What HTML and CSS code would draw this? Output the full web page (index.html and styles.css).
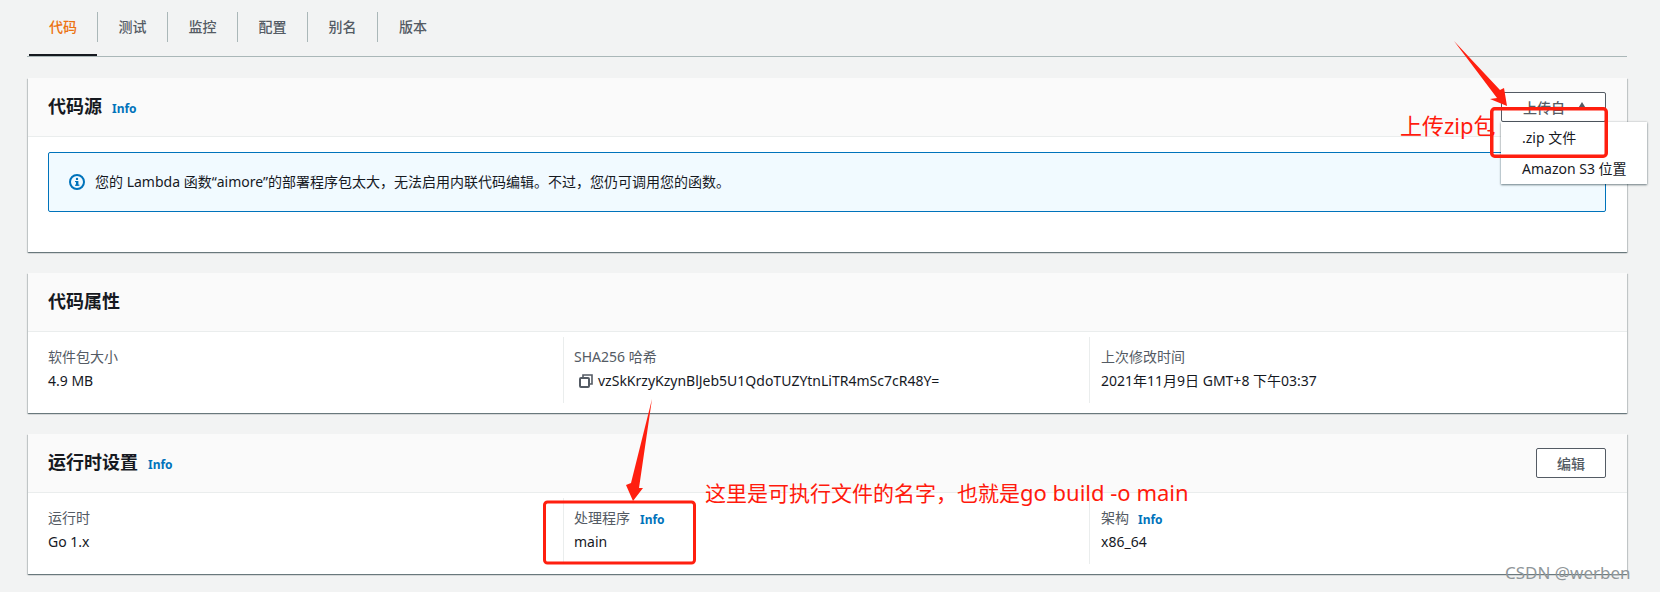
FILE: index.html
```html
<!DOCTYPE html>
<html lang="zh-CN">
<head>
<meta charset="utf-8">
<title>代码</title>
<link rel="stylesheet" href="styles.css">
</head>
<body>
<main class="page">
  <nav class="tabs">
    <a class="tab active"><span>代码</span></a>
    <a class="tab"><span>测试</span></a>
    <a class="tab"><span>监控</span></a>
    <a class="tab"><span>配置</span></a>
    <a class="tab"><span>别名</span></a>
    <a class="tab last"><span>版本</span></a>
  </nav>

  <section class="card card-source">
    <header class="card-head">
      <h2>代码源</h2><a class="info">Info</a>
      <div class="menu-wrap">
        <button class="btn btn-upload">上传自<i class="caret"></i></button>
        <ul class="menu">
          <li>.zip 文件</li>
          <li>Amazon S3 位置</li>
        </ul>
      </div>
    </header>
    <div class="source-body">
      <div class="notice">
        <svg class="notice-icon" viewBox="0 0 16 16" width="16" height="16"><circle cx="8" cy="8" r="7" fill="none" stroke="#0073bb" stroke-width="2"/><rect x="7" y="7" width="2.4" height="4.6" fill="#0073bb"/><rect x="6" y="10.6" width="4.4" height="1.2" fill="#0073bb"/><rect x="6" y="7" width="2" height="1.1" fill="#0073bb"/><circle cx="8" cy="4.9" r="1.2" fill="#0073bb"/></svg>
        <span class="notice-text">您的 Lambda 函数“aimore”的部署程序包太大，无法启用内联代码编辑。不过，您仍可调用您的函数。</span>
      </div>
    </div>
  </section>

  <section class="card">
    <header class="card-head"><h2>代码属性</h2></header>
    <div class="cols">
      <div class="col"><div class="label">软件包大小</div><div class="value">4.9 MB</div></div>
      <div class="col"><div class="label">SHA256 哈希</div><div class="value hash"><svg viewBox="0 0 14 14" width="14" height="14"><path d="M4 4V1h9v9h-3" fill="none" stroke="#545b64" stroke-width="1.6"/><rect x="1" y="4" width="9" height="9" rx="1" fill="none" stroke="#545b64" stroke-width="2"/></svg><span>vzSkKrzyKzynBlJeb5U1QdoTUZYtnLiTR4mSc7cR48Y=</span></div></div>
      <div class="col"><div class="label">上次修改时间</div><div class="value">2021年11月9日 GMT+8 下午03:37</div></div>
    </div>
  </section>

  <section class="card">
    <header class="card-head">
      <h2>运行时设置</h2><a class="info">Info</a>
      <div class="menu-wrap"><button class="btn btn-edit">编辑</button></div>
    </header>
    <div class="cols">
      <div class="col"><div class="label">运行时</div><div class="value">Go 1.x</div></div>
      <div class="col"><div class="label">处理程序<a class="info">Info</a></div><div class="value">main</div></div>
      <div class="col"><div class="label">架构<a class="info">Info</a></div><div class="value">x86_64</div></div>
    </div>
  </section>
</main>

<svg class="marks" viewBox="0 0 1660 592" width="1660" height="592">
  <polygon points="1454,41 1500,90 1504,88 1507,106 1490,99 1497,98" fill="#ff1f0f"/>
  <rect x="1491.75" y="108.75" width="114.5" height="47.5" rx="3" fill="none" stroke="#ff1f0f" stroke-width="3.5"/>
  <polygon points="652,399 639,488 643,488 633,501 626,485 631,483" fill="#ff1f0f"/>
  <rect x="544.5" y="502" width="150" height="61" rx="3" fill="none" stroke="#ff1f0f" stroke-width="3"/>
</svg>
<div class="note note-zip">上传zip包</div>
<div class="note note-main">这里是可执行文件的名字，也就是<span class="note-latin">go build -o main</span></div>
<div class="watermark">CSDN @werben</div>
</body>
</html>
```
FILE: styles.css
```css
* { box-sizing: border-box; }
html, body { margin: 0; height: 592px; overflow: hidden; }
body {
  position: relative;
  background: #f2f3f3;
  color: #16191f;
  font-family: "Noto Sans", "Noto Sans CJK SC", sans-serif;
  font-size: 14px;
}
.page { padding: 0 33px 0 28px; }

.tabs {
  display: flex;
  height: 57px;
  margin-left: -1px;
  padding-left: 2px;
  border-bottom: 1px solid #aab7b8;
}
.tab {
  width: 70px;
  height: 56px;
  padding-top: 12px;
  color: #545b64;
  font-weight: 500;
  text-align: center;
}
.tab:first-child { width: 68px; margin-right: 1px; }
.tab span {
  display: block;
  height: 30px;
  line-height: 30px;
  border-right: 1px solid #aab7b8;
}
.tab.last span { border-right: 0; }
.tab.active { color: #ec7211; border-bottom: 2px solid #16191f; }
.tab.active span { margin-right: -1px; }

.card {
  margin-top: 21px;
  background: #fff;
  box-shadow: 0 1px 1px 0 rgba(0, 28, 36, .4), 1px 1px 1px 0 rgba(0, 28, 36, .15), -1px 1px 1px 0 rgba(0, 28, 36, .15);
}
.card-head {
  display: flex;
  align-items: center;
  height: 59px;
  padding: 0 21px 0 20px;
  background: #fafafa;
  border-bottom: 1px solid #eaeded;
}
.card-head h2 { margin: 0 0 2px; font-size: 18px; font-weight: 700; line-height: 24px; }
.info { margin-left: 10px; color: #0073bb; font-size: 12px; font-weight: 700; }
.card-head > .info { margin-top: 2px; }
.label .info { vertical-align: -1px; }
.menu-wrap { position: relative; margin-left: auto; }

.btn {
  display: flex;
  align-items: center;
  height: 30px;
  background: #fff;
  border: 1px solid #545b64;
  border-radius: 2px;
  color: #545b64;
  font: inherit;
  font-weight: 500;
}
.btn-upload { width: 105px; padding: 0 0 0 21px; }
.btn-edit { width: 70px; justify-content: center; padding: 0; }
.caret {
  width: 0;
  height: 0;
  margin: -2px 0 0 12px;
  border-left: 5px solid transparent;
  border-right: 5px solid transparent;
  border-bottom: 8px solid #545b64;
}
.menu {
  position: absolute;
  top: 30px;
  left: 0;
  width: 146px;
  height: 62px;
  margin: 0;
  padding: 1px 0 0;
  list-style: none;
  background: #fff;
  box-shadow: 0 1px 2px rgba(0, 28, 36, .5), 0 0 2px rgba(0, 28, 36, .2);
}
.menu li { height: 31px; line-height: 30px; padding-left: 21px; white-space: nowrap; }

.source-body { height: 115px; padding: 15px 21px 0 20px; }
.notice {
  display: flex;
  align-items: center;
  gap: 10px;
  height: 60px;
  padding-left: 20px;
  background: #f1faff;
  border: 1px solid #0073bb;
  border-radius: 2px;
}
.notice-icon { flex: none; }
.notice-text { margin-bottom: 2px; }

.cols {
  display: grid;
  grid-template-columns: 515px 526px 1fr;
  height: 81px;
  padding: 5px 0 10px 20px;
}
.col { padding-top: 8px; }
.col + .col { padding-left: 10px; border-left: 1px solid #eaeded; }
.col:last-child { padding-left: 11px; }
.col:last-child .info { margin-left: 9px; }
.label, .value { height: 24px; line-height: 24px; white-space: nowrap; }
.label { color: #545b64; }
.hash { display: flex; align-items: center; gap: 5px; padding-left: 5px; }

.marks { position: absolute; top: 0; left: 0; pointer-events: none; }
.note {
  position: absolute;
  color: #ff1a0d;
  white-space: nowrap;
}
.note-zip { left: 1400px; top: 109px; font-size: 22px; line-height: 32px; }
.note-main { left: 705px; top: 477px; font-size: 21px; line-height: 30px; }
.note-latin { font-size: 22px; }
.watermark {
  position: absolute;
  left: 1505px;
  top: 562px;
  color: #8f9699;
  font-size: 17px;
  line-height: 22px;
  white-space: nowrap;
}
```
